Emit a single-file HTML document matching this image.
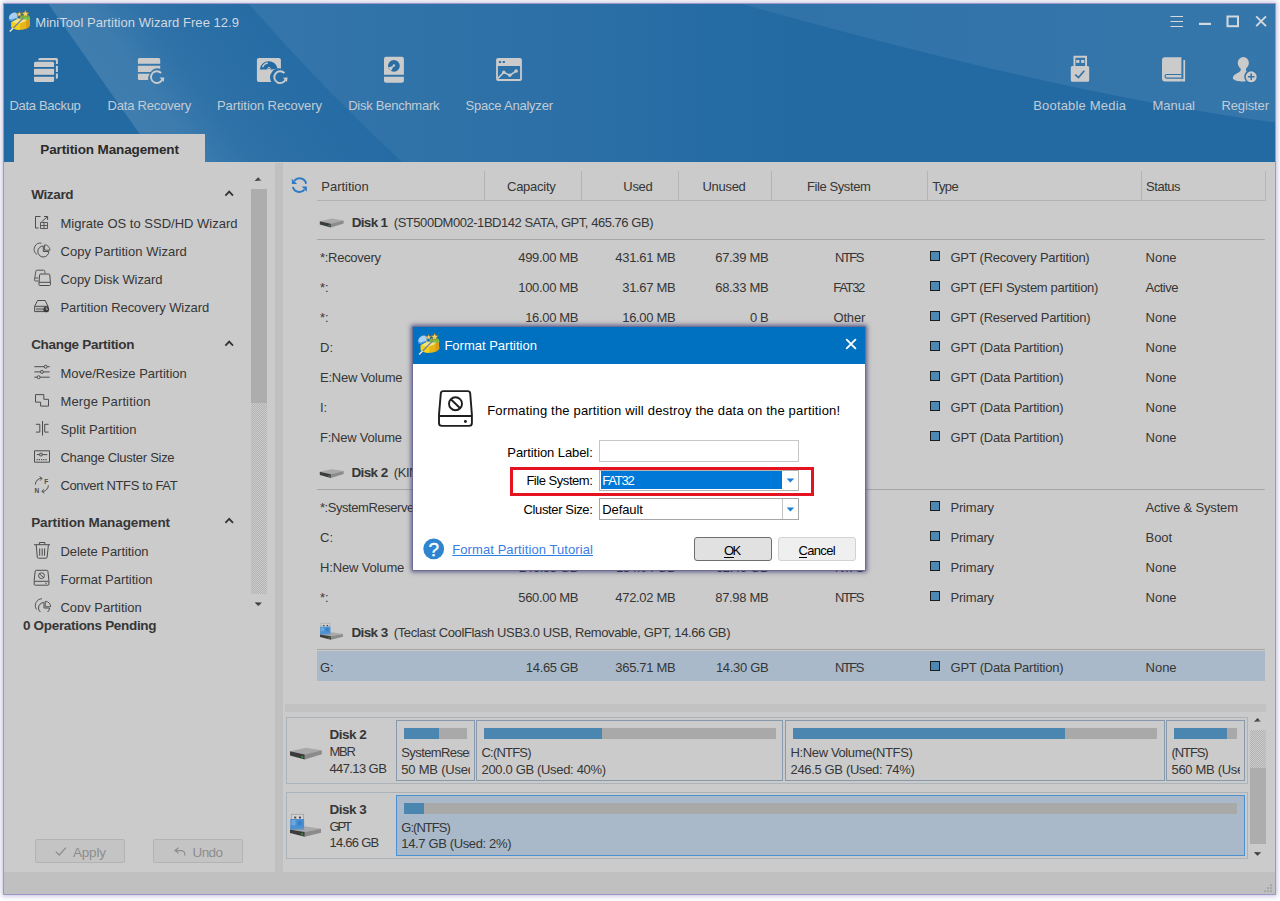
<!DOCTYPE html>
<html><head><meta charset="utf-8"><title>MiniTool Partition Wizard</title>
<style>
*{box-sizing:border-box;margin:0;padding:0}
html,body{width:1280px;height:901px;overflow:hidden;background:#fff}
body{font-family:"Liberation Sans",sans-serif;font-size:13px;color:#363636;position:relative}
.abs,.t,svg.i{position:absolute}
.t{white-space:pre;line-height:16px}
.clip{position:absolute;left:0;top:0;overflow:hidden}
#win{position:absolute;left:4px;top:4px;width:1271px;height:890px;background:#cbcbcb;box-shadow:0 0 0 1px rgba(150,146,196,.92),0 0 5px 2px rgba(150,148,200,.6)}
#hdr{position:absolute;left:4px;top:4px;width:1271px;height:158px;background:#236aa3;overflow:hidden}
#tab{position:absolute;left:14px;top:134px;width:191px;height:29px;background:#cbcbcb}
.vdiv{position:absolute;left:275.2px;top:163px;width:7.8px;height:708.5px;background:#c0c0c0}
.status{position:absolute;left:4px;top:872px;width:1271px;height:22px;background:#c0c0c0}
.hsep{position:absolute;width:1px;top:171px;height:29px;background:#b4b4b4}
.hline{position:absolute;height:1px;background:#b2b2b2}
.dot{position:absolute;height:1px;left:317px;width:948px;background:repeating-linear-gradient(90deg,#9f9f9f 0 1px,#adadad 1px 2px)}
.sq{position:absolute;left:930px;width:10px;height:10px;background:#4b89b4;border:1px solid #1c1c1c}
.sel{position:absolute;left:317px;top:651px;width:948px;height:30px;background:#a9b9c9}
.btn{position:absolute;border:1px solid #b3b3b3;background:#c4c4c4;border-radius:2px}
.drow{position:absolute;left:286px;width:962px;border:1px solid #abb3bb}
.blk{position:absolute;border:1px solid #8799ab}
.bar{position:absolute;height:11px;background:#a9a9a9}
.bar i{position:absolute;left:0;top:0;height:100%;background:#4a86b0}
.thumb{position:absolute;background:#adadad}
.stip{position:absolute;background-color:#c6c6c6;background-image:conic-gradient(#b3b3b3 25%,#cbcbcb 0 50%,#b3b3b3 0 75%,#cbcbcb 0);background-size:2px 2px}
#dlg{position:absolute;left:413px;top:327px;width:452.4px;height:243px;background:#fff;box-shadow:0 0 0 .8px #6c6c94,0 0 4.5px 2px rgba(48,48,108,.72)}
#dtitle{position:absolute;left:0;top:0;width:100%;height:36.7px;background:#0070c1}
.inp{position:absolute;background:#fff;border:1px solid #c6c6c6}
</style></head>
<body>
<div id="win"></div>
<div id="hdr">
<svg class="i" style="left:0;top:0" width="1271.5" height="158" viewBox="4 4 1271.5 158">
<defs>
<linearGradient id="g1" gradientUnits="userSpaceOnUse" x1="48" y1="4" x2="230" y2="-125"><stop offset="0" stop-color="#fff" stop-opacity=".13"/><stop offset=".15" stop-color="#fff" stop-opacity=".12"/><stop offset=".24" stop-color="#fff" stop-opacity=".085"/><stop offset=".34" stop-color="#fff" stop-opacity=".055"/><stop offset=".5" stop-color="#fff" stop-opacity=".032"/><stop offset=".7" stop-color="#fff" stop-opacity=".02"/><stop offset="1" stop-color="#fff" stop-opacity=".012"/></linearGradient>
<linearGradient id="g2" gradientUnits="userSpaceOnUse" x1="300" y1="0" x2="800" y2="0"><stop offset="0" stop-color="#fff" stop-opacity=".075"/><stop offset=".5" stop-color="#fff" stop-opacity=".04"/><stop offset="1" stop-color="#fff" stop-opacity="0"/></linearGradient>
<linearGradient id="g3" gradientUnits="userSpaceOnUse" x1="742" y1="0" x2="1276" y2="0"><stop offset="0" stop-color="#fff" stop-opacity=".06"/><stop offset="1" stop-color="#fff" stop-opacity=".085"/></linearGradient>
</defs>
<path d="M48.5,4 L159.3,162 H402 Q321,86.5 249,4z" fill="url(#g1)"/>
<path d="M249,4 Q321,86.5 402,162 H800 V4z" fill="url(#g2)"/>
<path d="M742,4 Q1070,96 1275.5,122.5 V4z" fill="url(#g3)"/>
</svg>
</div>
<div id="tab"></div>
<svg class="i" style="left:0;top:0" width="1280" height="170" viewBox="0 0 1280 170"><g fill="#cbcbcb"><path d="M39.8,58 h16.6 a1.5,1.5 0 0 1 1.5,1.5 v4.5 h-2 v-3.7 h-17.6 v-0.8 a1.5,1.5 0 0 1 1.5,-1.5z"/><rect x="55.9" y="65.8" width="2" height="6.2"/><path d="M55.9,73.6 h2 v3.6 a1.5,1.5 0 0 1 -1.5,1.5 h-0.5z"/><path d="M35.5,61.7 h17.1 a1.5,1.5 0 0 1 1.5,1.5 v3.8 h-20.1 v-3.8 a1.5,1.5 0 0 1 1.5,-1.5z"/><rect x="34" y="68.8" width="20.1" height="6"/><path d="M34,76.7 h20.1 v3.7 a1.5,1.5 0 0 1 -1.5,1.5 h-17.1 a1.5,1.5 0 0 1 -1.5,-1.5z"/></g><g fill="#cbcbcb"><path d="M139.4,58 h19.3 a1.5,1.5 0 0 1 1.5,1.5 v4.3 h-22.3 v-4.3 a1.5,1.5 0 0 1 1.5,-1.5z"/><path d="M137.9,65.8 h22.3 v3 a8.6,8.6 0 0 0 -9.5,3.2 h-12.8z"/><path d="M137.9,73.8 h11.8 a8.6,8.6 0 0 0 -1.5,6.1 h-8.8 a1.5,1.5 0 0 1 -1.5,-1.5z"/></g><path d="M161.14,73.00 A5.9,5.9 0 1 0 162.44,79.12" fill="none" stroke="#cbcbcb" stroke-width="1.9"/><path d="M164.34,77.42 L159.64,77.62 L163.64,82.02Z" fill="#cbcbcb"/><path d="M258.9,58 h20 a2,2 0 0 1 2,2 v8.6 a9,9 0 0 0 -9.6,13.3 h-12.4 a2,2 0 0 1 -2,-2 v-19.9 a2,2 0 0 1 2,-2z" fill="#cbcbcb"/><path d="M259.8,69.6 a9,9 0 0 1 17.8,-1.2 l-7,1.3 a2.2,2.2 0 0 0 -3.5,-0.1z" fill="#236aa3"/><path d="M262.6,67.2 a6.2,6.2 0 0 1 5.2,-4.2" fill="none" stroke="#cbcbcb" stroke-width="1.4"/><circle cx="269" cy="68.8" r="1.3" fill="none" stroke="#cbcbcb" stroke-width="1"/><path d="M284.44,73.10 A5.9,5.9 0 1 0 285.74,79.22" fill="none" stroke="#cbcbcb" stroke-width="1.9"/><path d="M287.64,77.52 L282.94,77.72 L286.94,82.12Z" fill="#cbcbcb"/><g fill="#cbcbcb"><path d="M386,56.8 h15.9 a2,2 0 0 1 2,2 v16 h-19.9 v-16 a2,2 0 0 1 2,-2z"/><path d="M384,76.7 h19.9 v4.1 a2,2 0 0 1 -2,2 h-15.9 a2,2 0 0 1 -2,-2z"/></g><circle cx="393.9" cy="65.8" r="5.9" fill="#2a6da4"/><path d="M393.9,65.8 L388.2,67.6 L390.9,71.2z" fill="#cbcbcb"/><circle cx="393.9" cy="65.6" r="1.25" fill="#cbcbcb"/><path d="M498.1,58 h21.8 a2,2 0 0 1 2,2 v19 a2,2 0 0 1 -2,2 h-21.8 a2,2 0 0 1 -2,-2 v-19 a2,2 0 0 1 2,-2z M497.9,65.9 v13.2 h22.2 v-13.2z" fill="#cbcbcb" fill-rule="evenodd"/><rect x="498.9" y="61.1" width="2.2" height="1.9" fill="#2a6da4"/><rect x="502.7" y="61.1" width="2.2" height="1.9" fill="#2a6da4"/><path d="M497.6,78.6 L503.8,72.4 L509.8,75.3 L516,71.1" fill="none" stroke="#cbcbcb" stroke-width="1.5"/><circle cx="503.8" cy="72.3" r="1.7" fill="#cbcbcb"/><circle cx="509.8" cy="75.3" r="1.7" fill="#cbcbcb"/><circle cx="516.1" cy="71" r="1.8" fill="#cbcbcb"/><path d="M1073.5,55.8 h13.5 v11 h-13.5z M1075.4,57.7 v8.5 h9.7 v-8.5z" fill="#cbcbcb" fill-rule="evenodd"/><rect x="1076.2" y="60" width="3.2" height="2.9" fill="#cbcbcb"/><rect x="1081.1" y="60" width="3.2" height="2.9" fill="#cbcbcb"/><path d="M1072.3,66 h15.4 a1.5,1.5 0 0 1 1.5,1.5 v12.8 a1.5,1.5 0 0 1 -1.5,1.5 h-15.4 a1.5,1.5 0 0 1 -1.5,-1.5 v-12.8 a1.5,1.5 0 0 1 1.5,-1.5z" fill="#cbcbcb"/><path d="M1075.2,74.6 L1078.5,77.6 L1084.3,70.8" fill="none" stroke="#3273a7" stroke-width="1.7"/><path d="M1165,57.2 h16.4 v24.2 h-16.4 a3,3 0 0 1 -3,-3 v-18.2 a3,3 0 0 1 3,-3z" fill="#cbcbcb"/><path d="M1181.4,74.5 h-14.6 a1.6,1.6 0 0 0 0,3.6 h14.6" fill="none" stroke="#3273a7" stroke-width="1.1"/><path d="M1181.4,79 h2 v-19 h1.7 v21.4 h-3.7z" fill="#cbcbcb"/><ellipse cx="1243.3" cy="63" rx="5.6" ry="6" fill="#cbcbcb"/><path d="M1240.6,66 h5.4 v4.6 c1,2 6.5,2.4 6.8,6.6 v2.6 c-3,1.6 -9,2 -13,1.5 c-3,-.3 -6,-1.4 -7,-2.6 c0,-5 5.6,-5 7.8,-8z" fill="#cbcbcb"/><circle cx="1251.2" cy="76.8" r="7" fill="#3273a7"/><circle cx="1251.2" cy="76.8" r="5.5" fill="#cbcbcb"/><path d="M1247.9,76.8 h6.6 M1251.2,73.5 v6.6" stroke="#3273a7" stroke-width="1.5"/><path d="M1170.5,16.5 h12.5 M1170.5,21.5 h12.5 M1170.5,26.5 h12.5" stroke="#d4d9de" stroke-width="1"/><rect x="1199" y="22.8" width="12" height="2.2" fill="#d4d9de"/><rect x="1227.5" y="16.5" width="10.5" height="9.7" fill="none" stroke="#d4d9de" stroke-width="2"/><path d="M1256.2,16.4 L1266,26.2 M1266,16.4 L1256.2,26.2" stroke="#d4d9de" stroke-width="1.9"/><g transform="translate(4.7,7.0) scale(1.0)"><path d="M4.2,13.4 C3.4,9.4 6.2,5.9 10.2,5.6 L13,6.2 L13.2,11.2 L7,14.6z" fill="#3b93e2"/><path d="M4.4,11.6 C4,8.4 6.6,5.8 10.2,5.6 L12.8,6.4 L12.8,10.4 L6.4,12.8z" fill="#a9d0ef"/><path d="M6.7,15.3 L12,12.5 L19,10.8 L24.8,10.4 L25.2,18.4 C23.6,21.6 18,23.2 13.2,22.8 C10.6,22.5 8.2,21.6 6.7,20.2z" fill="#e6b619"/><path d="M6.7,15.3 L12,12.5 L15.4,11.6 L15.4,22.8 C11.6,22.7 8.4,21.8 6.7,20.2z" fill="#f4d31e"/><path d="M21.4,11 L24.8,10.4 L25.2,18.4 C24.4,20 23,21 21.4,21.7z" fill="#de9d12"/><path d="M8,14.8 L12,12.5 L19,10.9 L24,10.6 L20.4,14.6 L13.4,17z" fill="#f3e38e"/><path d="M15.4,9.4 L18,8.2 L24.2,8.6 L25.6,11.4 L24.6,12.8 L19.6,12.6 L15.8,12.2z" fill="#79c043"/><path d="M14.60,4.30 L15.39,6.21 L17.45,6.37 L15.88,7.72 L16.36,9.73 L14.60,8.65 L12.84,9.73 L13.32,7.72 L11.75,6.37 L13.81,6.21Z" fill="#efd672" stroke="#8a6424" stroke-width=".5"/><path d="M20.70,2.90 L21.76,5.44 L24.50,5.66 L22.41,7.46 L23.05,10.14 L20.70,8.70 L18.35,10.14 L18.99,7.46 L16.90,5.66 L19.64,5.44Z" fill="#f1d565" stroke="#8a6424" stroke-width=".55"/><path d="M13.10,10.50 L13.54,11.49 L14.62,11.61 L13.81,12.33 L14.04,13.39 L13.10,12.85 L12.16,13.39 L12.39,12.33 L11.58,11.61 L12.66,11.49Z" fill="#eed36a"/><path d="M5.2,24.5 L18.6,11" stroke="#7b8088" stroke-width="1.25"/><path d="M5.1,24.6 L8.6,21.1" stroke="#e6e2dc" stroke-width="1.35"/></g></svg>
<span class="t" style="left:35.30px;top:14.52px;color:#d0d8e0;letter-spacing:0.041px;">MiniTool Partition Wizard Free 12.9</span><span class="t" style="left:9.50px;top:97.52px;color:#c2ccd5;letter-spacing:-0.314px;">Data Backup</span><span class="t" style="left:107.50px;top:97.52px;color:#c2ccd5;letter-spacing:-0.190px;">Data Recovery</span><span class="t" style="left:217.00px;top:97.52px;color:#c2ccd5;letter-spacing:-0.072px;">Partition Recovery</span><span class="t" style="left:348.20px;top:97.52px;color:#c2ccd5;letter-spacing:-0.257px;">Disk Benchmark</span><span class="t" style="left:465.50px;top:97.52px;color:#c2ccd5;letter-spacing:-0.219px;">Space Analyzer</span><span class="t" style="left:1033.20px;top:97.52px;color:#c2ccd5;letter-spacing:0.189px;">Bootable Media</span><span class="t" style="left:1152.50px;top:97.52px;color:#c2ccd5;letter-spacing:-0.028px;">Manual</span><span class="t" style="left:1221.50px;top:97.52px;color:#c2ccd5;letter-spacing:-0.132px;">Register</span><span class="t" style="left:40.30px;top:141.52px;font-size:13.5px;font-weight:700;color:#2b2b2b;letter-spacing:-0.123px;">Partition Management</span>

<!-- sidebar -->
<div class="clip" style="width:250px;height:611.5px"><svg class="i" style="left:0;top:0" width="250" height="620" viewBox="0 0 250 620"><path d="M225.4,195.6 L229.2,191.6 L233,195.6" fill="none" stroke="#333" stroke-width="1.8"/><path d="M225.4,345.6 L229.2,341.6 L233,345.6" fill="none" stroke="#333" stroke-width="1.8"/><path d="M225.4,522.8 L229.2,518.8 L233,522.8" fill="none" stroke="#333" stroke-width="1.8"/><path d="M40.5,216.5 H35.5 V228 H38.6" fill="none" stroke="#4d4d4d" stroke-width="1" /><path d="M41.6,221.8 L47.4,216.8" fill="none" stroke="#4d4d4d" stroke-width="1" /><path d="M44,216.5 H47.6 V220" fill="none" stroke="#4d4d4d" stroke-width="1" /><path d="M40.5,222.5 H47.5 V228.5 H40.5z M44,222.5 V228.5 M40.5,225.5 H47.5" fill="none" stroke="#4d4d4d" stroke-width="0.9" /><path d="M43.3,246 a5.5,5.5 0 1 0 5.5,5.5 H43.3z" fill="none" stroke="#4d4d4d" stroke-width="1" /><path d="M44.6,244.8 V250.2 H50 A5.5,5.5 0 0 0 44.6,244.8z" fill="none" stroke="#4d4d4d" stroke-width="0.9" /><path d="M37,254.5 A6.2,6.2 0 0 1 41.5,243.2" fill="none" stroke="#4d4d4d" stroke-width="0.9" /><path d="M38.6,281 H35.5 a1,1 0 0 1 -1,-1 L35.8,271.2 a1.2,1.2 0 0 1 1.2,-1 H43.6 a1.2,1.2 0 0 1 1.2,1 L45,273.4" fill="none" stroke="#4d4d4d" stroke-width="0.9" /><path d="M35,278 H38.4" fill="none" stroke="#4d4d4d" stroke-width="0.9" /><path d="M40.8,274 H48.6 a1.2,1.2 0 0 1 1.2,1 L50.5,284.5 a1,1 0 0 1 -1,1 H39.9 a1,1 0 0 1 -1,-1 L39.6,275 a1.2,1.2 0 0 1 1.2,-1z M39.2,282.3 H50.2" fill="none" stroke="#4d4d4d" stroke-width="1" /><path d="M37.6,300.5 H45.2 L48,306.3 V311.6 H34.6 V306.3z M34.6,306.3 H48" fill="none" stroke="#4d4d4d" stroke-width="1" /><rect x="36" y="307.8" width="7.5" height="2.6" fill="#8a8a8a"/><circle cx="46.2" cy="309.3" r="2.9" fill="#3a3a3a"/><path d="M46.2,309.3 V307.3 M46.2,309.3 H48" stroke="#ccc" stroke-width=".8"/><path d="M34.3,366.7 H44.2 M47.2,366.7 H49.7 M34.3,371.9 H40.4 M43.4,371.9 H49.7 M34.3,377.2 H37.1 M40.1,377.2 H49.7" fill="none" stroke="#4d4d4d" stroke-width="1" /><circle cx="45.7" cy="366.7" r="1.5" fill="none" stroke="#4d4d4d" stroke-width="1"/><circle cx="41.9" cy="371.9" r="1.5" fill="none" stroke="#4d4d4d" stroke-width="1"/><circle cx="38.6" cy="377.2" r="1.5" fill="none" stroke="#4d4d4d" stroke-width="1"/><path d="M35.5,394.6 H43.8 V399.3 H48.5 V406.1 H40.6 V402.1 H35.5z" fill="none" stroke="#4d4d4d" stroke-width="1" /><path d="M42.5,421 V435.5 M35.9,424.3 H39.8 V432.1 H35.9 M48.6,424.3 H44.7 V432.1 H48.6" fill="none" stroke="#4d4d4d" stroke-width="1" /><path d="M34.5,450.8 H49.5 V462.2 H34.5z M36.8,454.6 H39.6 M42.4,454.6 H47.3" fill="none" stroke="#4d4d4d" stroke-width="1" /><path d="M39.8,453.3 H42.2 V455.9 H39.8z" fill="none" stroke="#4d4d4d" stroke-width="0.9" /><path d="M36.6,459.6 H47.6" fill="none" stroke="#4d4d4d" stroke-width="1.2" stroke-dasharray="1.2 1"/><path d="M35.3,484.5 A6.6,6.6 0 0 1 41.6,478.2" fill="none" stroke="#4d4d4d" stroke-width="1" /><path d="M39.6,476.6 L42.2,478.3 L40.2,480.6" fill="none" stroke="#4d4d4d" stroke-width="0.9" /><path d="M48.4,485.4 A6.6,6.6 0 0 1 42.4,491.6" fill="none" stroke="#4d4d4d" stroke-width="1" /><path d="M44.4,493.2 L41.8,491.5 L43.8,489.2" fill="none" stroke="#4d4d4d" stroke-width="0.9" /><text x="44.3" y="483.6" font-family="Liberation Sans" font-size="6.5" font-weight="700" fill="#4d4d4d">F</text><text x="34.6" y="492.6" font-family="Liberation Sans" font-size="6.5" font-weight="700" fill="#4d4d4d">N</text><path d="M34,544.7 H50 M39.4,544.5 V542.5 H44.9 V544.5 M36.2,545 L37.3,557.2 a1,1 0 0 0 1,1 H46.1 a1,1 0 0 0 1,-1 L48.4,545 M39.7,548.4 V555.7 M42.2,548.4 V555.7 M44.6,548.4 V555.7" fill="none" stroke="#4d4d4d" stroke-width="1" /><path d="M36.2,570.3 H46.9 a1,1 0 0 1 1,.9 L48.9,580.5 V584.2 a1,1 0 0 1 -1,1 H35.2 a1,1 0 0 1 -1,-1 V580.5 L35.2,571.2 a1,1 0 0 1 1,-.9z M34.3,581.3 H48.8" fill="none" stroke="#4d4d4d" stroke-width="1" /><circle cx="41.5" cy="575.7" r="2.9" fill="none" stroke="#4d4d4d" stroke-width="1"/><path d="M39.5,573.7 L43.5,577.7" stroke="#4d4d4d" stroke-width="1"/><circle cx="46" cy="583.3" r=".7" fill="#4d4d4d"/><path d="M44,602.5 a5.5,5.5 0 1 0 5.5,5.5 H44z" fill="none" stroke="#4d4d4d" stroke-width="1" /><path d="M45.3,601.3 V606.7 H50.7 A5.5,5.5 0 0 0 45.3,601.3z" fill="none" stroke="#4d4d4d" stroke-width="0.9" /><path d="M36.4,609.5 A7,7 0 0 1 42,598.6" fill="none" stroke="#4d4d4d" stroke-width="0.9" /></svg><span class="t" style="left:31.20px;top:186.52px;font-size:13.5px;font-weight:700;letter-spacing:-0.348px;">Wizard</span><span class="t" style="left:31.20px;top:336.52px;font-size:13.5px;font-weight:700;letter-spacing:-0.314px;">Change Partition</span><span class="t" style="left:31.20px;top:514.52px;font-size:13.5px;font-weight:700;letter-spacing:-0.112px;">Partition Management</span><span class="t" style="left:60.50px;top:215.52px;">Migrate OS to SSD/HD Wizard</span><span class="t" style="left:60.50px;top:243.52px;letter-spacing:0.029px;">Copy Partition Wizard</span><span class="t" style="left:60.50px;top:271.52px;letter-spacing:-0.093px;">Copy Disk Wizard</span><span class="t" style="left:60.50px;top:299.52px;letter-spacing:-0.062px;">Partition Recovery Wizard</span><span class="t" style="left:60.50px;top:365.52px;letter-spacing:-0.008px;">Move/Resize Partition</span><span class="t" style="left:60.50px;top:393.52px;letter-spacing:0.132px;">Merge Partition</span><span class="t" style="left:60.50px;top:421.52px;letter-spacing:-0.050px;">Split Partition</span><span class="t" style="left:60.50px;top:449.52px;letter-spacing:-0.285px;">Change Cluster Size</span><span class="t" style="left:60.50px;top:477.52px;letter-spacing:-0.384px;">Convert NTFS to FAT</span><span class="t" style="left:60.50px;top:543.52px;letter-spacing:-0.053px;">Delete Partition</span><span class="t" style="left:60.50px;top:571.52px;letter-spacing:-0.026px;">Format Partition</span><span class="t" style="left:60.50px;top:599.52px;letter-spacing:-0.027px;">Copy Partition</span></div>
<div class="thumb" style="left:251px;top:189px;width:16px;height:214px"></div>
<div class="stip" style="left:251px;top:403px;width:16px;height:190.5px"></div>
<div class="vdiv"></div>
<div class="status"></div>
<div class="btn" style="left:35px;top:839px;width:89.5px;height:23.5px"></div>
<div class="btn" style="left:153px;top:839px;width:89.5px;height:23.5px"></div>

<!-- table -->
<div class="hline" style="left:317px;top:200px;width:948.5px"></div>
<div class="hsep" style="left:484px"></div><div class="hsep" style="left:581px"></div><div class="hsep" style="left:678px"></div><div class="hsep" style="left:771px"></div><div class="hsep" style="left:927px"></div><div class="hsep" style="left:1141px"></div><div class="hsep" style="left:1265px"></div>
<div class="dot" style="top:239px"></div><div class="dot" style="top:489px"></div><div class="dot" style="top:649px"></div>
<div class="sel"></div>
<div class="sq" style="top:251px"></div><div class="sq" style="top:281px"></div><div class="sq" style="top:311px"></div><div class="sq" style="top:341px"></div><div class="sq" style="top:371px"></div><div class="sq" style="top:401px"></div><div class="sq" style="top:431px"></div>
<div class="sq" style="top:501px"></div><div class="sq" style="top:531px"></div><div class="sq" style="top:561px"></div><div class="sq" style="top:591px"></div><div class="sq" style="top:661px"></div>

<!-- disk map -->
<div class="abs" style="left:284.5px;top:704.3px;width:981.5px;height:7.7px;background:#c2c2c2"></div>
<div class="drow" style="top:717px;height:67px"></div>
<div class="drow" style="top:792px;height:67px"></div>
<div class="blk" style="left:396px;top:720px;width:79px;height:61px"></div>
<div class="blk" style="left:476px;top:720px;width:307px;height:61px"></div>
<div class="blk" style="left:784.5px;top:720px;width:380.5px;height:61px"></div>
<div class="blk" style="left:1166px;top:720px;width:79px;height:61px"></div>
<div class="blk" style="left:396px;top:795px;width:849px;height:61px;background:#a9b9c9;border-color:#4b90d2"></div>
<div class="bar" style="left:404px;top:728px;width:63px"><i style="width:35px"></i></div>
<div class="bar" style="left:484px;top:728px;width:292px"><i style="width:118px"></i></div>
<div class="bar" style="left:793px;top:728px;width:364px"><i style="width:272px"></i></div>
<div class="bar" style="left:1174px;top:728px;width:63px"><i style="width:53px"></i></div>
<div class="bar" style="left:404px;top:803px;width:833px"><i style="width:20px"></i></div>
<div class="stip" style="left:1250px;top:730px;width:16px;height:38px"></div>
<div class="thumb" style="left:1250px;top:768px;width:16px;height:76px"></div>

<svg class="i" style="left:0;top:0" width="1280" height="901" viewBox="0 0 1280 901"><g transform="translate(319.8,218.6) scale(0.75)"><path d="M0,3.5 L16,0 L31.8,2.4 L14.8,6.8z" fill="#a9a9a9"/><path d="M0,3.5 L14.8,6.8 V11.8 L0,7.8z" fill="#3c3c3c"/><path d="M14.8,6.8 L31.8,2.4 V6.4 L14.8,11.8z" fill="#8b8b8b"/><rect x="11.6" y="8.4" width="1.5" height="1.6" fill="#3fae3f"/></g><g transform="translate(319.8,469.2) scale(0.75)"><path d="M0,3.5 L16,0 L31.8,2.4 L14.8,6.8z" fill="#a9a9a9"/><path d="M0,3.5 L14.8,6.8 V11.8 L0,7.8z" fill="#3c3c3c"/><path d="M14.8,6.8 L31.8,2.4 V6.4 L14.8,11.8z" fill="#8b8b8b"/><rect x="11.6" y="8.4" width="1.5" height="1.6" fill="#3fae3f"/></g><g transform="translate(320,623) scale(0.74)"><rect x="1.4" y="0.3" width="12" height="6" fill="#d2d2d2" stroke="#a2a2a2" stroke-width=".8"/><rect x="4.2" y="2.6" width="2" height="1.8" fill="#444"/><rect x="9" y="2.6" width="2" height="1.8" fill="#444"/><rect x="0.3" y="5" width="13.8" height="10" fill="#4b8fd0"/><rect x="1.6" y="6" width="4" height="7" fill="#78b2e6" opacity=".7"/><rect x="8" y="7" width="3.6" height="5" fill="#2f78c4" opacity=".7"/><path d="M0,15.5 L16,12.5 L31,14.7 L14.8,18z" fill="#a9a9a9"/><rect x="0.3" y="11" width="13.8" height="4.6" fill="#4b8fd0" opacity=".85"/><path d="M0,15.5 L14.8,18 V22.8 L0,19z" fill="#3c3c3c"/><path d="M14.8,18 L31,14.7 V18.7 L14.8,22.8z" fill="#8b8b8b"/><rect x="11.4" y="19.4" width="1.6" height="1.5" fill="#3fae3f"/></g><g transform="translate(290,747.8) scale(1.0)"><path d="M0,3.5 L16,0 L31.8,2.4 L14.8,6.8z" fill="#a9a9a9"/><path d="M0,3.5 L14.8,6.8 V11.8 L0,7.8z" fill="#3c3c3c"/><path d="M14.8,6.8 L31.8,2.4 V6.4 L14.8,11.8z" fill="#8b8b8b"/><rect x="11.6" y="8.4" width="1.5" height="1.6" fill="#3fae3f"/></g><g transform="translate(290,814) scale(1.0)"><rect x="1.4" y="0.3" width="12" height="6" fill="#d2d2d2" stroke="#a2a2a2" stroke-width=".8"/><rect x="4.2" y="2.6" width="2" height="1.8" fill="#444"/><rect x="9" y="2.6" width="2" height="1.8" fill="#444"/><rect x="0.3" y="5" width="13.8" height="10" fill="#4b8fd0"/><rect x="1.6" y="6" width="4" height="7" fill="#78b2e6" opacity=".7"/><rect x="8" y="7" width="3.6" height="5" fill="#2f78c4" opacity=".7"/><path d="M0,15.5 L16,12.5 L31,14.7 L14.8,18z" fill="#a9a9a9"/><rect x="0.3" y="11" width="13.8" height="4.6" fill="#4b8fd0" opacity=".85"/><path d="M0,15.5 L14.8,18 V22.8 L0,19z" fill="#3c3c3c"/><path d="M14.8,18 L31,14.7 V18.7 L14.8,22.8z" fill="#8b8b8b"/><rect x="11.4" y="19.4" width="1.6" height="1.5" fill="#3fae3f"/></g><path d="M306.1,183.7 A6.7,6.7 0 0 0 294.3,180.9" fill="none" stroke="#2f7bc5" stroke-width="2"/><path d="M291.9,178.7 V183.9 H297.1z" fill="#2f7bc5"/><path d="M292.9,186.9 A6.7,6.7 0 0 0 304.5,189.6" fill="none" stroke="#2f7bc5" stroke-width="2"/><path d="M306.9,186.6 V191.8 L301.7,186.6z" fill="#2f7bc5"/><defs><linearGradient id="ag" x1="0" y1="0" x2="1" y2="1"><stop offset="0" stop-color="#1e1e1e"/><stop offset=".55" stop-color="#4a4a4a"/><stop offset="1" stop-color="#9a9a9a"/></linearGradient></defs><path d="M254.6,181 L258.2,177.2 L261.8,181z" fill="url(#ag)"/><path d="M254.8,602.4 L262,602.4 L258.4,606.2z" fill="url(#ag)"/><path d="M1254,721.8 L1257.6,718 L1261.2,721.8z" fill="url(#ag)"/><path d="M1254,852.2 L1261.2,852.2 L1257.6,856z" fill="url(#ag)"/><path d="M55.8,851.6 L59.2,855 L66,847.6" fill="none" stroke="#8d8d8d" stroke-width="1.3"/><path d="M178.6,847.6 L175,850.6 L178.6,853.4 M175.2,850.6 H181.2 a3.6,3.6 0 0 1 3.6,3.6 V855.4" fill="none" stroke="#8d8d8d" stroke-width="1.2"/><rect x="1270" y="884.2" width="1.9" height="1.9" fill="#a4a4a4"/><rect x="1267" y="887.2" width="1.9" height="1.9" fill="#a4a4a4"/><rect x="1270" y="887.2" width="1.9" height="1.9" fill="#a4a4a4"/><rect x="1264" y="890.2" width="1.9" height="1.9" fill="#a4a4a4"/><rect x="1267" y="890.2" width="1.9" height="1.9" fill="#a4a4a4"/><rect x="1270" y="890.2" width="1.9" height="1.9" fill="#a4a4a4"/></svg>
<span class="t" style="left:23.00px;top:617.52px;font-size:13.5px;font-weight:700;letter-spacing:-0.317px;">0 Operations Pending</span><span class="t" style="left:73.00px;top:844.52px;font-size:13.5px;color:#8d8d8d;letter-spacing:-0.195px;">Apply</span><span class="t" style="left:192.50px;top:844.52px;font-size:13.5px;color:#8d8d8d;letter-spacing:-0.594px;">Undo</span><span class="t" style="left:321.30px;top:178.52px;letter-spacing:-0.025px;">Partition</span><span class="t" style="left:507.00px;top:178.52px;letter-spacing:-0.254px;">Capacity</span><span class="t" style="left:623.30px;top:178.52px;letter-spacing:-0.286px;">Used</span><span class="t" style="left:702.50px;top:178.52px;letter-spacing:-0.303px;">Unused</span><span class="t" style="left:807.00px;top:178.52px;letter-spacing:-0.411px;">File System</span><span class="t" style="left:932.20px;top:178.52px;letter-spacing:-0.529px;">Type</span><span class="t" style="left:1146.00px;top:178.52px;letter-spacing:-0.452px;">Status</span><span class="t" style="left:351.80px;top:214.52px;font-size:13.5px;font-weight:700;letter-spacing:-0.716px;">Disk 1</span><span class="t" style="left:393.80px;top:214.52px;letter-spacing:-0.462px;">(ST500DM002-1BD142 SATA, GPT, 465.76 GB)</span><span class="t" style="left:351.40px;top:464.52px;font-size:13.5px;font-weight:700;letter-spacing:-0.596px;">Disk 2</span><span class="t" style="left:393.80px;top:464.52px;letter-spacing:-0.438px;">(KINGSTON SA400S37480G SATA, MBR, 447.13 GB)</span><span class="t" style="left:351.40px;top:624.52px;font-size:13.5px;font-weight:700;letter-spacing:-0.596px;">Disk 3</span><span class="t" style="left:393.80px;top:624.52px;letter-spacing:-0.381px;">(Teclast CoolFlash USB3.0 USB, Removable, GPT, 14.66 GB)</span><span class="t" style="left:320.00px;top:249.52px;letter-spacing:-0.286px;">*:Recovery</span><span class="t" style="left:518.27px;top:249.52px;letter-spacing:-0.330px;">499.00 MB</span><span class="t" style="left:615.37px;top:249.52px;letter-spacing:-0.330px;">431.61 MB</span><span class="t" style="left:715.28px;top:249.52px;letter-spacing:-0.334px;">67.39 MB</span><span class="t" style="left:835.00px;top:249.52px;letter-spacing:-1.484px;">NTFS</span><span class="t" style="left:950.50px;top:249.52px;letter-spacing:-0.251px;">GPT (Recovery Partition)</span><span class="t" style="left:1145.50px;top:249.52px;letter-spacing:0.007px;">None</span><span class="t" style="left:320.00px;top:279.52px;">*:</span><span class="t" style="left:518.27px;top:279.52px;letter-spacing:-0.330px;">100.00 MB</span><span class="t" style="left:622.28px;top:279.52px;letter-spacing:-0.334px;">31.67 MB</span><span class="t" style="left:715.28px;top:279.52px;letter-spacing:-0.334px;">68.33 MB</span><span class="t" style="left:833.30px;top:279.52px;letter-spacing:-1.336px;">FAT32</span><span class="t" style="left:950.50px;top:279.52px;letter-spacing:-0.320px;">GPT (EFI System partition)</span><span class="t" style="left:1145.50px;top:279.52px;letter-spacing:-0.481px;">Active</span><span class="t" style="left:320.00px;top:309.52px;">*:</span><span class="t" style="left:525.18px;top:309.52px;letter-spacing:-0.334px;">16.00 MB</span><span class="t" style="left:622.28px;top:309.52px;letter-spacing:-0.334px;">16.00 MB</span><span class="t" style="left:749.90px;top:309.52px;letter-spacing:-0.410px;">0 B</span><span class="t" style="left:833.50px;top:309.52px;letter-spacing:-0.179px;">Other</span><span class="t" style="left:950.50px;top:309.52px;letter-spacing:-0.244px;">GPT (Reserved Partition)</span><span class="t" style="left:1145.50px;top:309.52px;letter-spacing:0.007px;">None</span><span class="t" style="left:320.00px;top:339.52px;">D:</span><span class="t" style="left:518.95px;top:339.52px;letter-spacing:-0.326px;">100.00 GB</span><span class="t" style="left:622.97px;top:339.52px;letter-spacing:-0.330px;">61.20 GB</span><span class="t" style="left:715.97px;top:339.52px;letter-spacing:-0.330px;">38.80 GB</span><span class="t" style="left:835.00px;top:339.52px;letter-spacing:-1.484px;">NTFS</span><span class="t" style="left:950.50px;top:339.52px;letter-spacing:-0.233px;">GPT (Data Partition)</span><span class="t" style="left:1145.50px;top:339.52px;letter-spacing:0.007px;">None</span><span class="t" style="left:320.00px;top:369.52px;letter-spacing:-0.251px;">E:New Volume</span><span class="t" style="left:518.95px;top:369.52px;letter-spacing:-0.326px;">120.00 GB</span><span class="t" style="left:622.97px;top:369.52px;letter-spacing:-0.330px;">60.10 GB</span><span class="t" style="left:715.97px;top:369.52px;letter-spacing:-0.330px;">59.90 GB</span><span class="t" style="left:835.00px;top:369.52px;letter-spacing:-1.484px;">NTFS</span><span class="t" style="left:950.50px;top:369.52px;letter-spacing:-0.233px;">GPT (Data Partition)</span><span class="t" style="left:1145.50px;top:369.52px;letter-spacing:0.007px;">None</span><span class="t" style="left:320.00px;top:399.52px;">I:</span><span class="t" style="left:518.95px;top:399.52px;letter-spacing:-0.326px;">100.00 GB</span><span class="t" style="left:622.97px;top:399.52px;letter-spacing:-0.330px;">50.10 GB</span><span class="t" style="left:715.97px;top:399.52px;letter-spacing:-0.330px;">49.90 GB</span><span class="t" style="left:835.00px;top:399.52px;letter-spacing:-1.484px;">NTFS</span><span class="t" style="left:950.50px;top:399.52px;letter-spacing:-0.233px;">GPT (Data Partition)</span><span class="t" style="left:1145.50px;top:399.52px;letter-spacing:0.007px;">None</span><span class="t" style="left:320.00px;top:429.52px;letter-spacing:-0.232px;">F:New Volume</span><span class="t" style="left:518.95px;top:429.52px;letter-spacing:-0.326px;">145.16 GB</span><span class="t" style="left:622.97px;top:429.52px;letter-spacing:-0.330px;">80.10 GB</span><span class="t" style="left:715.97px;top:429.52px;letter-spacing:-0.330px;">65.06 GB</span><span class="t" style="left:835.00px;top:429.52px;letter-spacing:-1.484px;">NTFS</span><span class="t" style="left:950.50px;top:429.52px;letter-spacing:-0.233px;">GPT (Data Partition)</span><span class="t" style="left:1145.50px;top:429.52px;letter-spacing:0.007px;">None</span><span class="t" style="left:320.00px;top:499.52px;letter-spacing:-0.444px;">*:SystemReserved</span><span class="t" style="left:525.18px;top:499.52px;letter-spacing:-0.334px;">50.00 MB</span><span class="t" style="left:622.28px;top:499.52px;letter-spacing:-0.334px;">26.40 MB</span><span class="t" style="left:715.28px;top:499.52px;letter-spacing:-0.334px;">23.60 MB</span><span class="t" style="left:835.00px;top:499.52px;letter-spacing:-1.484px;">NTFS</span><span class="t" style="left:950.50px;top:499.52px;letter-spacing:-0.197px;">Primary</span><span class="t" style="left:1145.50px;top:499.52px;letter-spacing:-0.153px;">Active &amp; System</span><span class="t" style="left:320.00px;top:529.52px;">C:</span><span class="t" style="left:518.95px;top:529.52px;letter-spacing:-0.326px;">200.00 GB</span><span class="t" style="left:622.97px;top:529.52px;letter-spacing:-0.330px;">80.50 GB</span><span class="t" style="left:709.97px;top:529.52px;letter-spacing:-0.321px;">119.50 GB</span><span class="t" style="left:835.00px;top:529.52px;letter-spacing:-1.484px;">NTFS</span><span class="t" style="left:950.50px;top:529.52px;letter-spacing:-0.197px;">Primary</span><span class="t" style="left:1145.50px;top:529.52px;letter-spacing:-0.017px;">Boot</span><span class="t" style="left:320.00px;top:559.52px;letter-spacing:-0.153px;">H:New Volume</span><span class="t" style="left:518.95px;top:559.52px;letter-spacing:-0.326px;">246.53 GB</span><span class="t" style="left:616.05px;top:559.52px;letter-spacing:-0.326px;">184.04 GB</span><span class="t" style="left:715.97px;top:559.52px;letter-spacing:-0.330px;">62.49 GB</span><span class="t" style="left:835.00px;top:559.52px;letter-spacing:-1.484px;">NTFS</span><span class="t" style="left:950.50px;top:559.52px;letter-spacing:-0.197px;">Primary</span><span class="t" style="left:1145.50px;top:559.52px;letter-spacing:0.007px;">None</span><span class="t" style="left:320.00px;top:589.52px;">*:</span><span class="t" style="left:518.27px;top:589.52px;letter-spacing:-0.330px;">560.00 MB</span><span class="t" style="left:615.37px;top:589.52px;letter-spacing:-0.330px;">472.02 MB</span><span class="t" style="left:715.28px;top:589.52px;letter-spacing:-0.334px;">87.98 MB</span><span class="t" style="left:835.00px;top:589.52px;letter-spacing:-1.484px;">NTFS</span><span class="t" style="left:950.50px;top:589.52px;letter-spacing:-0.197px;">Primary</span><span class="t" style="left:1145.50px;top:589.52px;letter-spacing:0.007px;">None</span><span class="t" style="left:320.00px;top:659.52px;">G:</span><span class="t" style="left:525.87px;top:659.52px;letter-spacing:-0.330px;">14.65 GB</span><span class="t" style="left:615.37px;top:659.52px;letter-spacing:-0.330px;">365.71 MB</span><span class="t" style="left:715.97px;top:659.52px;letter-spacing:-0.330px;">14.30 GB</span><span class="t" style="left:835.00px;top:659.52px;letter-spacing:-1.484px;">NTFS</span><span class="t" style="left:950.50px;top:659.52px;letter-spacing:-0.233px;">GPT (Data Partition)</span><span class="t" style="left:1145.50px;top:659.52px;letter-spacing:0.007px;">None</span><span class="t" style="left:329.50px;top:726.52px;font-size:13.5px;font-weight:700;letter-spacing:-0.496px;">Disk 2</span><span class="t" style="left:329.50px;top:743.52px;letter-spacing:-1.295px;">MBR</span><span class="t" style="left:329.50px;top:760.52px;letter-spacing:-0.607px;">447.13 GB</span><span class="t" style="left:329.50px;top:801.52px;font-size:13.5px;font-weight:700;letter-spacing:-0.496px;">Disk 3</span><span class="t" style="left:329.50px;top:818.52px;letter-spacing:-2.117px;">GPT</span><span class="t" style="left:329.50px;top:835.02px;letter-spacing:-0.734px;">14.66 GB</span><span class="t" style="left:481.50px;top:744.52px;letter-spacing:-0.801px;">C:(NTFS)</span><span class="t" style="left:481.50px;top:761.52px;letter-spacing:-0.331px;">200.0 GB (Used: 40%)</span><span class="t" style="left:790.50px;top:744.52px;letter-spacing:-0.369px;">H:New Volume(NTFS)</span><span class="t" style="left:790.50px;top:761.52px;letter-spacing:-0.342px;">246.5 GB (Used: 74%)</span><span class="t" style="left:401.30px;top:819.52px;letter-spacing:-0.975px;">G:(NTFS)</span><span class="t" style="left:401.30px;top:835.92px;letter-spacing:-0.360px;">14.7 GB (Used: 2%)</span>
<div class="clip" style="width:470.2px;height:901px"><span class="t" style="left:401.30px;top:744.52px;letter-spacing:-0.599px;">SystemReserved(NTFS)</span><span class="t" style="left:401.30px;top:761.52px;letter-spacing:-0.209px;">50 MB (Used: 52%)</span></div>
<div class="clip" style="width:1240.2px;height:901px"><span class="t" style="left:1171.50px;top:744.52px;letter-spacing:-1.082px;">(NTFS)</span><span class="t" style="left:1171.50px;top:761.52px;letter-spacing:-0.322px;">560 MB (Used: 84%)</span></div>

<!-- dialog -->
<div id="dlg"><div id="dtitle"></div></div>
<div class="inp" style="left:599px;top:440px;width:200px;height:22px"></div>
<div class="abs" style="left:510.3px;top:467px;width:303.7px;height:28.5px;border:3px solid #e5131f"></div>
<div class="inp" style="left:599px;top:470px;width:200px;height:20.5px;border-color:#b4b4b4"></div>
<div class="abs" style="left:601px;top:471px;width:181px;height:18px;background:#0078d7"></div>
<div class="inp" style="left:599px;top:497.5px;width:200px;height:22.5px;border-color:#a6a6a6"></div>
<div class="abs" style="left:781.6px;top:498.5px;width:1px;height:20.5px;background:#c4c4c4"></div>
<div class="abs" style="left:694px;top:537.3px;width:78px;height:23.7px;background:#e1e1e1;border:1px solid #6e6e6e;border-radius:3px"></div>
<div class="abs" style="left:778.3px;top:537.3px;width:77.6px;height:23.7px;background:#efefef;border:1px solid #d2d2d2;border-radius:3px"></div>
<div class="abs" style="left:724.3px;top:556.6px;width:9.6px;height:1px;background:#000"></div>
<div class="abs" style="left:798.6px;top:556.6px;width:8.4px;height:1px;background:#000"></div>
<svg class="i" style="left:0;top:0" width="1280" height="901" viewBox="0 0 1280 901"><g transform="translate(414,330) scale(1.0)"><path d="M4.2,13.4 C3.4,9.4 6.2,5.9 10.2,5.6 L13,6.2 L13.2,11.2 L7,14.6z" fill="#3b93e2"/><path d="M4.4,11.6 C4,8.4 6.6,5.8 10.2,5.6 L12.8,6.4 L12.8,10.4 L6.4,12.8z" fill="#a9d0ef"/><path d="M6.7,15.3 L12,12.5 L19,10.8 L24.8,10.4 L25.2,18.4 C23.6,21.6 18,23.2 13.2,22.8 C10.6,22.5 8.2,21.6 6.7,20.2z" fill="#e6b619"/><path d="M6.7,15.3 L12,12.5 L15.4,11.6 L15.4,22.8 C11.6,22.7 8.4,21.8 6.7,20.2z" fill="#f4d31e"/><path d="M21.4,11 L24.8,10.4 L25.2,18.4 C24.4,20 23,21 21.4,21.7z" fill="#de9d12"/><path d="M8,14.8 L12,12.5 L19,10.9 L24,10.6 L20.4,14.6 L13.4,17z" fill="#f3e38e"/><path d="M15.4,9.4 L18,8.2 L24.2,8.6 L25.6,11.4 L24.6,12.8 L19.6,12.6 L15.8,12.2z" fill="#79c043"/><path d="M14.60,4.30 L15.39,6.21 L17.45,6.37 L15.88,7.72 L16.36,9.73 L14.60,8.65 L12.84,9.73 L13.32,7.72 L11.75,6.37 L13.81,6.21Z" fill="#efd672" stroke="#8a6424" stroke-width=".5"/><path d="M20.70,2.90 L21.76,5.44 L24.50,5.66 L22.41,7.46 L23.05,10.14 L20.70,8.70 L18.35,10.14 L18.99,7.46 L16.90,5.66 L19.64,5.44Z" fill="#f1d565" stroke="#8a6424" stroke-width=".55"/><path d="M13.10,10.50 L13.54,11.49 L14.62,11.61 L13.81,12.33 L14.04,13.39 L13.10,12.85 L12.16,13.39 L12.39,12.33 L11.58,11.61 L12.66,11.49Z" fill="#eed36a"/><path d="M5.2,24.5 L18.6,11" stroke="#7b8088" stroke-width="1.25"/><path d="M5.1,24.6 L8.6,21.1" stroke="#e6e2dc" stroke-width="1.35"/></g><path d="M846.2,339.1 L855.9,348.8 M855.9,339.1 L846.2,348.8" stroke="#fff" stroke-width="1.9"/><path d="M443.4,391.1 H467.6 a2.6,2.6 0 0 1 2.6,2.3 L471.9,414.6 V423 a2.9,2.9 0 0 1 -2.9,2.9 H441.9 a2.9,2.9 0 0 1 -2.9,-2.9 V414.6 L440.8,393.4 a2.6,2.6 0 0 1 2.6,-2.3z M439.2,416 H471.7" fill="none" stroke="#1e1e1e" stroke-width="1.9" stroke-linejoin="round"/><circle cx="455.5" cy="403.7" r="6.5" fill="none" stroke="#1e1e1e" stroke-width="1.9"/><path d="M450.8,399.2 L460.2,408.2" stroke="#1e1e1e" stroke-width="1.9"/><circle cx="465.4" cy="421.5" r="1.45" fill="#1e1e1e"/><circle cx="433.7" cy="548.8" r="10.4" fill="#2f84d0"/><text x="433.7" y="556" text-anchor="middle" font-family="Liberation Sans" font-size="19" font-weight="400" fill="#fff" stroke="#fff" stroke-width=".35">?</text><path d="M786.6,478.6 H794.2 L790.4,482.4z" fill="#1d7fd6"/><path d="M786.6,507.6 H794.2 L790.4,511.4z" fill="#1d7fd6"/></svg>
<span class="t" style="left:444.40px;top:337.52px;color:#ffffff;">Format Partition</span><span class="t" style="left:487.20px;top:402.52px;color:#000;letter-spacing:0.179px;">Formating the partition will destroy the data on the partition!</span><span class="t" style="left:507.30px;top:444.52px;color:#000;letter-spacing:-0.082px;">Partition Label:</span><span class="t" style="left:526.40px;top:472.52px;color:#000;letter-spacing:-0.465px;">File System:</span><span class="t" style="left:523.50px;top:501.52px;color:#000;letter-spacing:-0.367px;">Cluster Size:</span><span class="t" style="left:602.30px;top:472.52px;color:#fff;letter-spacing:-1.211px;">FAT32</span><span class="t" style="left:602.30px;top:501.52px;color:#000;letter-spacing:-0.117px;">Default</span><span class="t" style="left:452.30px;top:541.52px;color:#3b7de4;letter-spacing:0.078px;text-decoration:underline;text-underline-offset:1px;text-decoration-thickness:1px;text-decoration-color:#2a80e0;">Format Partition Tutorial</span><span class="t" style="left:724.10px;top:542.52px;color:#000;letter-spacing:-1.697px;">OK</span><span class="t" style="left:798.40px;top:542.52px;color:#000;letter-spacing:-0.634px;">Cancel</span>

</body></html>
